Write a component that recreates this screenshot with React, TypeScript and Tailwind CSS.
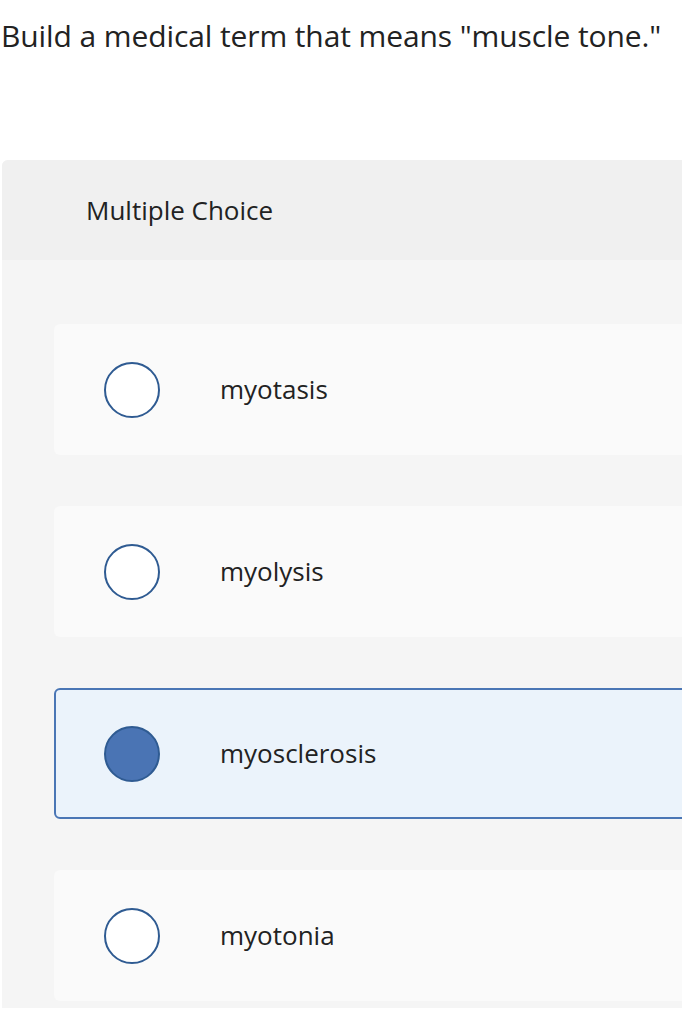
const options = [
  { label: 'myotasis', selected: false },
  { label: 'myolysis', selected: false },
  { label: 'myosclerosis', selected: true },
  { label: 'myotonia', selected: false },
]

export default function App() {
  return (
    <div
      className="w-[682px] h-[1010px] overflow-hidden bg-white text-[#222222]"
      style={{ fontFamily: '"Open Sans", "Liberation Sans", sans-serif' }}
    >
      <h1 className="pl-[1px] pt-[14px] text-[30px] leading-[44px] tracking-[-0.1px] whitespace-nowrap">
        Build a medical term that means "muscle tone."
      </h1>

      <div className="ml-[2px] mt-[102px] w-[760px] rounded-tl-md bg-[#f5f5f5] pb-[7px]">
        <div className="flex h-[100px] items-center rounded-tl-md bg-[#f0f0f0] pl-[84px]">
          <span className="text-[26px]">Multiple Choice</span>
        </div>

        <div className="flex flex-col gap-[51px] pl-[52px] pt-[64px]">
          {options.map((o) => (
            <div
              key={o.label}
              className={`flex h-[131px] items-center rounded-md ${
                o.selected
                  ? 'border-2 border-[#4a76b5] bg-[#ebf3fb]'
                  : 'bg-[#fafafa]'
              }`}
            >
              <div className={`${o.selected ? 'ml-[48px]' : 'ml-[50px]'} flex items-center`}>
                <span
                  className={`h-[56px] w-[56px] rounded-full border-2 border-[#2f5b92] ${
                    o.selected ? 'bg-[#4a74b4]' : 'bg-white'
                  }`}
                />
                <span className="ml-[60px] text-[26px]">{o.label}</span>
              </div>
            </div>
          ))}
        </div>
      </div>
    </div>
  )
}
